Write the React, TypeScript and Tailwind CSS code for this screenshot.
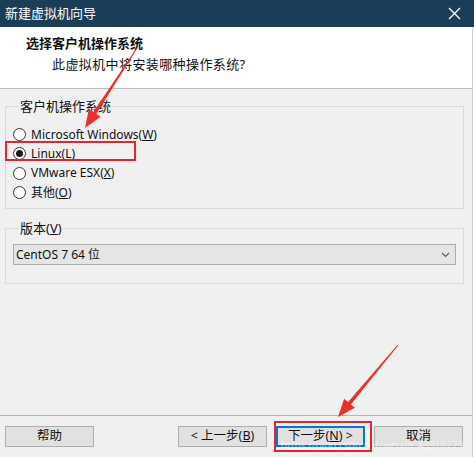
const RADIOS = [
  { label: "Microsoft Windows(", key: "W", checked: false },
  { label: "Linux(", key: "L", checked: true },
  { label: "VMware ESX(", key: "X", checked: false },
  { label: "其他(", key: "O", checked: false },
];

const Radio = ({ checked }: { checked: boolean }) => (
  <span className="w-[13px] h-[13px] rounded-full border border-[#333] bg-white flex items-center justify-center shrink-0">
    {checked && <span className="w-[7px] h-[7px] rounded-full bg-[#1a1a1a]" />}
  </span>
);

const Btn = ({ children, primary }: { children: React.ReactNode; primary?: boolean }) => (
  <button
    className={
      "w-[89px] h-[21px] flex items-center justify-center whitespace-nowrap bg-[#e1e1e1] text-[12.5px] text-[#111] " +
      (primary ? "border-2 border-[#0078d7]" : "border border-[#adadad]")
    }
  >
    {children}
  </button>
);

export default function App() {
  return (
    <div
      className="relative w-[474px] h-[457px] bg-white overflow-hidden text-[#111]"
      style={{ fontFamily: '"Noto Sans", "Noto Sans CJK SC", sans-serif' }}
    >
      {/* title bar */}
      <div className="h-[27px] bg-[#1c3d57] flex items-center justify-between pl-[5px] pr-[13px] text-white text-[13px]">
        <span>新建虚拟机向导</span>
        <svg width="13" height="13" viewBox="0 0 13 13" stroke="white" strokeWidth="1.2">
          <line x1="1" y1="1" x2="12" y2="12" />
          <line x1="12" y1="1" x2="1" y2="12" />
        </svg>
      </div>

      <div className="w-[473px] border-r border-[#c9d0d6] flex flex-col h-[430px]">
        {/* header */}
        <div className="h-[62px] bg-white border-b border-[#bdbdbd] pl-[26px] pt-[5px]">
          <div className="text-[13px] font-bold leading-[22px]">选择客户机操作系统</div>
          <div className="text-[13px] leading-[20px] pl-[26px] tracking-[0.4px]">此虚拟机中将安装哪种操作系统?</div>
        </div>

        {/* body */}
        <div className="flex-1 bg-[#f0f0f0] px-[5px] pt-[8px] pr-[8px]">
          <fieldset className="border border-[#dadada] h-[112px] pl-[7px]">
            <legend className="ml-[6px] px-[1px] text-[13px] leading-[18px]">客户机操作系统</legend>
            <div className="flex flex-col pt-[10px] text-[12px]">
              {RADIOS.map((r) => (
                <div key={r.key} className="h-[19.3px] flex items-center gap-[5px]">
                  <Radio checked={r.checked} />
                  <span className="text-[12px]">
                    {r.label}
                    <u>{r.key}</u>)
                  </span>
                </div>
              ))}
            </div>
          </fieldset>

          <fieldset className="border border-[#dadada] h-[65px] mt-[10px] px-[7px]">
            <legend className="ml-[6px] px-[1px] text-[13px] leading-[18px]">
              版本(<u>V</u>)
            </legend>
            <div className="mt-[7px] h-[21px] bg-[#e5e5e5] border border-[#acacac] flex items-center justify-between pl-[2px] pr-[5px] text-[12px]">
              <span>CentOS 7 64 位</span>
              <svg width="9" height="6" viewBox="0 0 9 6" fill="none" stroke="#606060" strokeWidth="1.2">
                <polyline points="1,1 4.5,4.5 8,1" />
              </svg>
            </div>
          </fieldset>
        </div>

        {/* footer */}
        <div className="h-[42px] bg-[#f0f0f0] border-t border-[#b4b4b4] flex items-start pt-[10px] pl-[5px] pr-[9px]">
          <Btn>帮助</Btn>
          <div className="flex-1" />
          <div className="flex gap-[9px]">
            <Btn>
              &lt; 上一步(<u>B</u>)
            </Btn>
            <Btn primary>
              下一步(<u>N</u>) &gt;
            </Btn>
            <Btn>取消</Btn>
          </div>
        </div>
      </div>

      {/* watermark */}
      <span className="absolute left-[281px] top-[439px] text-[10px] leading-[12px] text-white/50">
        https://blog.csdn.net/weixin_43918279
      </span>

      {/* annotations */}
      <div className="absolute left-[5px] top-[141px] w-[131px] h-[20px] border-2 border-[#e3262c]" />
      <div className="absolute left-[274px] top-[421px] w-[98px] h-[31px] border-2 border-[#e3262c]" />
      <svg className="absolute inset-0 pointer-events-none" width="474" height="457">
        <polygon
          fill="#e8302c"
          points="137.4,48.3 96.3,113.9 100.7,116.7 85,128 88.9,109.1 93.3,111.9 136.6,47.7"
        />
        <polygon
          fill="#e8302c"
          points="398.4,345.3 350.9,404.4 354.9,407.7 338,417 344.1,398.7 348.1,402 397.6,344.7"
        />
      </svg>
    </div>
  );
}
